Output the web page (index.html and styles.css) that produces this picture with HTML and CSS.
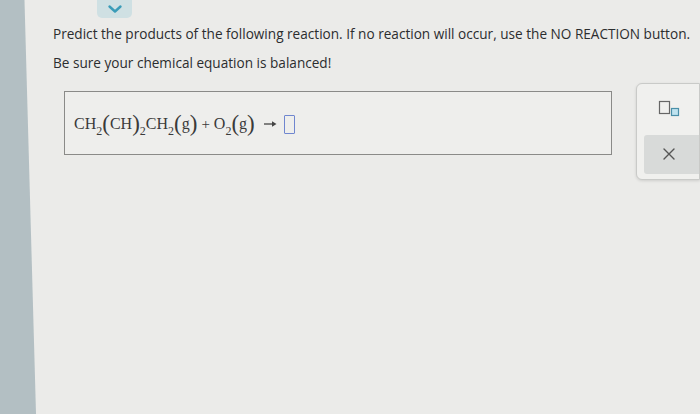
FILE: index.html
```html
<!DOCTYPE html>
<html lang="en">
<head>
    <meta charset="UTF-8">
    <meta name="viewport" content="width=device-width, initial-scale=1.0">
    <title>Predict the products</title>
    <link rel="stylesheet" href="styles.css">
</head>
<body>
    <div class="screen">
        <aside class="side-rail"></aside>

        <main class="question-area">
            <div class="collapse-tab">
                <svg width="16" height="10" viewBox="0 0 16 10">
                    <path d="M2.5 2.5 L8 7.5 L13.5 2.5" fill="none" stroke="#3b9cb8" stroke-width="2.4" stroke-linecap="round" stroke-linejoin="round"/>
                </svg>
            </div>

            <p class="prompt prompt-first">Predict the products of the following reaction. If no reaction will occur, use the NO REACTION button.</p>
            <p class="prompt">Be sure your chemical equation is balanced!</p>

            <div class="answer-row">
                <div class="equation-box">
                    <span class="equation">CH<sub>2</sub><span class="paren">(</span>CH<span class="paren">)</span><sub>2</sub>CH<sub>2</sub><span class="paren">(</span>g<span class="paren">)</span><span class="op">+</span>O<sub>2</sub><span class="paren">(</span>g<span class="paren">)</span><span class="arrow">
                        <svg width="13" height="8" viewBox="0 0 13 8">
                            <path d="M0 4 H9" stroke="#444" stroke-width="1.3"/>
                            <path d="M8 1.2 L12.5 4 L8 6.8 Z" fill="#444"/>
                        </svg>
                    </span><span class="slot"></span></span>
                </div>

                <div class="tool-panel">
                    <button class="tool-button" aria-label="subscript">
                        <svg width="22" height="18" viewBox="0 0 22 18">
                            <rect x="1.5" y="1.5" width="10" height="12" fill="none" stroke="#666" stroke-width="1.2"/>
                            <rect x="13.5" y="8.5" width="7" height="7" fill="#bfe3ef" stroke="#4a8fa8" stroke-width="1.2"/>
                        </svg>
                    </button>
                    <button class="tool-button clear-button" aria-label="clear">
                        <svg width="14" height="14" viewBox="0 0 14 14">
                            <path d="M2 2 L12 12 M12 2 L2 12" stroke="#555" stroke-width="1.4" stroke-linecap="round"/>
                        </svg>
                    </button>
                </div>
            </div>
        </main>
    </div>
</body>
</html>
```

FILE: styles.css
```css
:root {
    --page-bg: #ebebe9;
    --rail-bg: #b3bfc3;
    --text-dark: #2b2d2f;
    --box-border: #8a8a88;
    --tab-bg: #cfe0e3;
    --slot-blue: #6f86cf;
}

* {
    box-sizing: border-box;
    margin: 0;
    padding: 0;
}

body {
    font-family: 'Open Sans', sans-serif;
    background-color: var(--page-bg);
    color: var(--text-dark);
    overflow: hidden;
}

.screen {
    display: flex;
    height: 414px;
}

.side-rail {
    width: 36px;
    flex-shrink: 0;
    background-color: var(--rail-bg);
    clip-path: polygon(0 0, 68% 0, 100% 100%, 0 100%);
}

.question-area {
    flex: 1;
    padding-left: 17px;
    min-width: 0;
}

.collapse-tab {
    width: 35px;
    height: 18px;
    margin-left: 44px;
    background-color: var(--tab-bg);
    border-radius: 0 0 5px 5px;
    display: flex;
    align-items: center;
    justify-content: center;
}

.prompt {
    font-size: 13.6px;
    line-height: 18px;
    white-space: nowrap;
}

.prompt-first {
    margin-top: 7px;
    margin-bottom: 11px;
}

.answer-row {
    display: flex;
    align-items: flex-start;
    margin-top: 19px;
    margin-left: 11px;
}

.equation-box {
    width: 550px;
    height: 64px;
    border: 1px solid var(--box-border);
    background-color: #eeeeec;
    display: flex;
    align-items: center;
    padding-left: 9px;
    padding-top: 2px;
}

.equation {
    font-family: 'Liberation Serif', serif;
    font-size: 16px;
    color: #3a3a3a;
    display: flex;
    align-items: center;
}

.equation sub {
    font-size: 12px;
    position: relative;
    top: 7px;
}

.paren {
    font-size: 23px;
    font-weight: 300;
    line-height: 1;
    position: relative;
    top: -1px;
}

.op {
    margin: 0 4px;
    font-size: 15px;
}

.arrow {
    display: flex;
    align-items: center;
    margin: 0 7px 0 9px;
}

.slot {
    display: inline-block;
    width: 11px;
    height: 19px;
    border: 1.5px solid var(--slot-blue);
    border-radius: 1px;
}

.tool-panel {
    margin-left: 24px;
    margin-top: -8px;
    width: 64px;
    height: 97px;
    border: 1px solid #c9cac8;
    border-radius: 6px 0 0 6px;
    background-color: #f0f0ee;
    box-shadow: 0 1px 3px rgba(0, 0, 0, 0.12);
    padding: 6px 0 5px 7px;
    display: flex;
    flex-direction: column;
    gap: 7px;
}

.tool-button {
    border: none;
    background: transparent;
    height: 38px;
    display: flex;
    align-items: center;
    justify-content: center;
    padding-right: 6px;
    cursor: pointer;
}

.clear-button {
    background-color: #d8dad9;
    border-radius: 3px 0 0 3px;
    height: 40px;
}
```
